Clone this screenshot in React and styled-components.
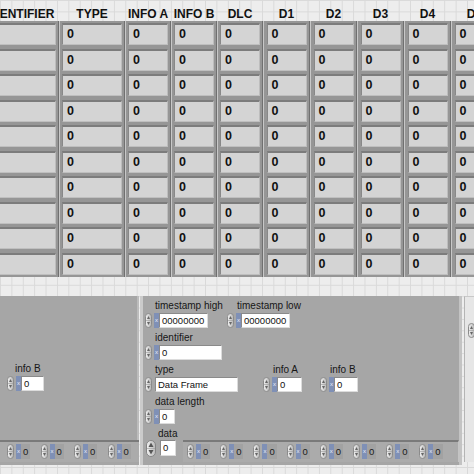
import React from 'react';
import styled, { createGlobalStyle } from 'styled-components';

const GlobalStyle = createGlobalStyle`
  html, body { margin: 0; padding: 0; }
  body {
    width: 474px;
    height: 474px;
    overflow: hidden;
    background-color: #ededed;
    background-image:
      linear-gradient(to right, #d9d9d9 1px, transparent 1px),
      linear-gradient(to bottom, #d9d9d9 1px, transparent 1px);
    background-size: 11.4px 11.4px;
    font-family: "Liberation Sans", Arial, sans-serif;
  }
`;

const Page = styled.div`
  display: flex;
  flex-direction: column;
  width: 474px;
  height: 474px;
  overflow: hidden;
`;

/* ---------- table ---------- */
const Table = styled.div`
  display: flex;
  align-items: flex-start;
  margin-left: -17px;
`;

const Column = styled.div`
  display: flex;
  flex-direction: column;
  flex: none;
`;

const Header = styled.div`
  height: 21px;
  padding-top: 8px;
  box-sizing: border-box;
  display: flex;
  justify-content: center;
  align-items: center;
  font-weight: 700;
  font-size: 12px;
  line-height: 13px;
  color: #111;
  white-space: nowrap;
`;

const Frame = styled.div`
  display: flex;
  flex-direction: column;
  gap: 3.56px;
  padding: 2px ${(p) => p.$pad}px 2px;
  background: #969696;
  border-left: 1px solid #c8c8c8;
  border-right: 1px solid #707070;
`;

const Cell = styled.div`
  width: ${(p) => p.$w}px;
  height: 22px;
  box-sizing: border-box;
  background: #d4d4d4;
  border-top: 2px solid #7c7c7c;
  border-left: 1px solid #888;
  border-right: 1px solid #bdbdbd;
  border-bottom: 1px solid #bfbfbf;
  padding-left: 4px;
  font-weight: 700;
  font-size: 12.5px;
  line-height: 19px;
  color: #111;
`;

/* ---------- lower panels ---------- */
const Lower = styled.div`
  display: flex;
  height: 169px;
  margin-top: 19px;
`;

const LeftPanel = styled.div`
  width: 139px;
  flex: none;
  display: flex;
  flex-direction: column;
  background: #a6a6a6;
`;

const LeftUpper = styled.div`
  flex: 1;
  padding: 67px 0 0 7px;
  border-right: 2px solid #bcbcbc;
`;

const MidPanel = styled.div`
  width: 322px;
  box-sizing: border-box;
  flex: none;
  margin-left: 1px;
  display: flex;
  flex-direction: column;
  gap: 4px;
  padding: 4px 0 3px 2px;
  background: #a6a6a6;
  border-left: 3px solid #cbcbcb;
  border-right: 3px solid #c3c3c3;
`;

const RightPanel = styled.div`
  flex: 1;
  margin-left: 2px;
  margin-bottom: 3px;
  padding: 26px 0 0 3px;
  background: #e6e6e6;
  border-left: 1px solid #b4b4b4;
  border-top: 1px solid #c8c8c8;
`;

const Row = styled.div`
  display: flex;
  align-items: flex-start;
`;

const Group = styled.div`
  display: flex;
  flex-direction: column;
  gap: 2px;
  flex: none;
  width: ${(p) => (p.$w ? `${p.$w}px` : 'auto')};
  margin-left: ${(p) => p.$ml || 0}px;
`;

const Label = styled.div`
  font-size: 10px;
  line-height: 11px;
  height: 11px;
  padding-left: ${(p) => (p.$pl !== undefined ? p.$pl : 10)}px;
  color: #161616;
  white-space: nowrap;
`;

const Ctrl = styled.div`
  display: flex;
  align-items: center;
  height: ${(p) => p.$h || 15}px;
`;

const Radix = styled.span`
  width: 5px;
  height: 15px;
  margin-left: 2px;
  background: #7f90b6;
  color: #e9edf7;
  font-size: 6px;
  line-height: 15px;
  text-align: center;
  flex: none;
`;

const Field = styled.div`
  width: ${(p) => p.$w}px;
  height: ${(p) => p.$h || 15}px;
  box-sizing: border-box;
  margin-left: ${(p) => p.$ml || 0}px;
  background: #fff;
  border: 1px solid;
  border-color: #8a8a8a #dcdcdc #dcdcdc #8a8a8a;
  padding-left: 2px;
  font-size: 9.5px;
  line-height: 13px;
  color: #111;
  white-space: nowrap;
  overflow: hidden;
`;

const Strip = styled.div`
  display: flex;
  align-items: center;
  height: 22px;
  box-sizing: border-box;
  padding-left: ${(p) => p.$pl || 0}px;
  margin-left: ${(p) => p.$ml || 0}px;
  flex: ${(p) => (p.$grow ? 1 : 'none')};
  background: #ababab;
  border-top: 2px solid #7a7a7a;
  border-right: ${(p) => (p.$grow ? '1px solid #c4c4c4' : 'none')};
`;

const Elem = styled.div`
  display: flex;
  align-items: center;
  width: ${(p) => p.$pitch}px;
  flex: none;
`;

const ElemVal = styled.span`
  font-size: 9.5px;
  line-height: 15px;
  height: 15px;
  padding: 0 2px;
  color: #1a1a1a;
  background: #a2a2a2;
`;

function Spinner() {
  return (
    <svg width="7" height="15" viewBox="0 0 7 15" style={{ flex: 'none' }}>
      <defs>
        <linearGradient id="spg" x1="0" x2="1" y1="0" y2="0">
          <stop offset="0" stopColor="#f2f2f2" />
          <stop offset="1" stopColor="#b5b5b5" />
        </linearGradient>
      </defs>
      <rect x="0.5" y="0.5" width="6" height="14" rx="3" fill="url(#spg)" stroke="#8b8b8b" />
      <path d="M3.5 3 L5 6 L2 6 Z" fill="#666" />
      <path d="M3.5 12 L5 9 L2 9 Z" fill="#666" />
      <line x1="1" y1="7.5" x2="6" y2="7.5" stroke="#9a9a9a" strokeWidth="0.6" />
    </svg>
  );
}

function BigSpinner() {
  return (
    <svg width="10" height="17" viewBox="0 0 10 17" style={{ flex: 'none', marginLeft: 1 }}>
      <defs>
        <linearGradient id="bspg" x1="0" x2="1" y1="0" y2="0">
          <stop offset="0" stopColor="#f4f4f4" />
          <stop offset="1" stopColor="#b8b8b8" />
        </linearGradient>
      </defs>
      <rect x="0.5" y="0.5" width="9" height="16" rx="4.5" fill="url(#bspg)" stroke="#858585" />
      <path d="M5 2.5 L7.5 7 L2.5 7 Z" fill="#555" />
      <path d="M5 14.5 L7.5 10 L2.5 10 Z" fill="#555" />
      <line x1="1" y1="8.5" x2="9" y2="8.5" stroke="#999" strokeWidth="0.6" />
    </svg>
  );
}

function NumCtrl({ w, value, radix = true }) {
  return (
    <Ctrl>
      <Spinner />
      {radix ? <Radix>x</Radix> : null}
      <Field $w={w} $ml={radix ? 0 : 3}>{value}</Field>
    </Ctrl>
  );
}

function ArrayElem({ pitch }) {
  return (
    <Elem $pitch={pitch}>
      <Spinner />
      <Radix>x</Radix>
      <ElemVal>0</ElemVal>
    </Elem>
  );
}

const columns = [
  { name: 'IDENTIFIER', w: 70, pad: 2, blank: true },
  { name: 'TYPE', w: 60, pad: 2 },
  { name: 'INFO A', w: 40, pad: 2 },
  { name: 'INFO B', w: 40, pad: 2 },
  { name: 'DLC', w: 40, pad: 2 },
  { name: 'D1', w: 40, pad: 2.5 },
  { name: 'D2', w: 40, pad: 2.5 },
  { name: 'D3', w: 40, pad: 2.5 },
  { name: 'D4', w: 40, pad: 2.5 },
  { name: 'D5', w: 40, pad: 2.5 },
];

const rows = Array.from({ length: 10 }, (_, i) => i);

export default function App() {
  return (
    <Page>
      <GlobalStyle />
      <Table>
        {columns.map((c) => (
          <Column key={c.name}>
            <Header>{c.name}</Header>
            <Frame $pad={c.pad}>
              {rows.map((r) => (
                <Cell key={r} $w={c.w}>{c.blank ? '' : '0'}</Cell>
              ))}
            </Frame>
          </Column>
        ))}
      </Table>

      <Lower>
        <LeftPanel>
          <LeftUpper>
            <Group>
              <Label $pl={8}>info B</Label>
              <NumCtrl w={23} value="0" />
            </Group>
          </LeftUpper>
          <Strip $pl={7}>
            {[0, 1, 2, 3].map((i) => (
              <ArrayElem key={i} pitch={33.5} />
            ))}
          </Strip>
          <div style={{ height: 3 }} />
        </LeftPanel>

        <MidPanel>
          <Row>
            <Group $w={82}>
              <Label>timestamp high</Label>
              <NumCtrl w={49} value="00000000" />
            </Group>
            <Group>
              <Label>timestamp low</Label>
              <NumCtrl w={49} value="00000000" />
            </Group>
          </Row>
          <Row>
            <Group>
              <Label>identifier</Label>
              <NumCtrl w={63} value="0" />
            </Group>
          </Row>
          <Row>
            <Group $w={118}>
              <Label>type</Label>
              <NumCtrl w={83} value="Data Frame" radix={false} />
            </Group>
            <Group $w={57}>
              <Label>info A</Label>
              <NumCtrl w={25} value="0" />
            </Group>
            <Group>
              <Label>info B</Label>
              <NumCtrl w={24} value="0" />
            </Group>
          </Row>
          <Row>
            <Group>
              <Label>data length</Label>
              <NumCtrl w={16} value="0" />
            </Group>
          </Row>
          <Group>
            <Label $pl={13}>data</Label>
            <Row style={{ marginTop: -1 }}>
              <Ctrl $h={17}>
                <BigSpinner />
                <Field $w={16} $h={16} $ml={4}>0</Field>
              </Ctrl>
              <Strip $ml={7} $pl={4} $grow>
                {[0, 1, 2, 3, 4, 5, 6, 7].map((i) => (
                  <ArrayElem key={i} pitch={33.2} />
                ))}
              </Strip>
            </Row>
          </Group>
        </MidPanel>

        <RightPanel>
          <Spinner />
        </RightPanel>
      </Lower>
    </Page>
  );
}
